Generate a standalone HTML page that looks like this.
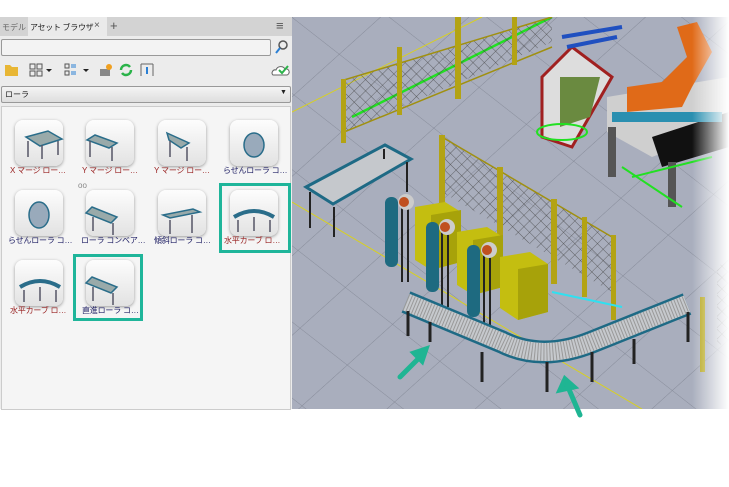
<!DOCTYPE html>
<html><head><meta charset="utf-8"><style>
body{margin:0;width:729px;height:487px;background:#fff;position:relative;overflow:hidden;font-family:"Liberation Sans","Noto Sans CJK JP",sans-serif;}
.abs{position:absolute}
#panel{left:0;top:17px;width:292px;height:392px;background:#ececec;}
.tile{position:absolute;width:48px;height:46px;border-radius:8px;background:linear-gradient(#fdfdfd,#e2e2e2);box-shadow:0 1px 3px #999;}
.lbl{position:absolute;font-size:8px;color:#222;white-space:nowrap;letter-spacing:-0.2px}
.hl{position:absolute;border:3px solid #1fb59a;}
</style></head><body>
<div id="panel" class="abs">
 <div class="abs" style="left:0;top:0;width:292px;height:19px;background:#d3d3d3"></div>
 <div class="abs" style="left:2px;top:5px;font-size:8px;color:#666">モデル</div>
 <div class="abs" style="left:28px;top:0;width:79px;height:19px;background:#eaeaea"></div>
 <div class="abs" style="left:30px;top:5px;font-size:8px;color:#222;letter-spacing:-0.3px">アセット ブラウザ</div>
 <div class="abs" style="left:94px;top:3px;font-size:10px;color:#555">×</div>
 <div class="abs" style="left:110px;top:1px;font-size:13px;color:#555">+</div>
 <div class="abs" style="left:276px;top:1px;font-size:13px;color:#555">≡</div>
 <div class="abs" style="left:1px;top:22px;width:268px;height:15px;background:#f3f3f3;border:1px solid #999;border-radius:2px"></div>
 <svg class="abs" style="left:274px;top:22px" width="16" height="16"><circle cx="9" cy="6" r="4" fill="none" stroke="#555" stroke-width="1.5"/><path d="M6 9 L2 14" stroke="#2a7fd4" stroke-width="2"/></svg>
 <svg class="abs" style="left:3px;top:44px" width="160" height="18">
  <path d="M2 4h5l2 2h6v9H2z" fill="#e8b634"/>
  <g fill="none" stroke="#555"><rect x="27" y="3" width="5" height="5"/><rect x="34" y="3" width="5" height="5"/><rect x="27" y="10" width="5" height="5"/><rect x="34" y="10" width="5" height="5"/></g>
  <path d="M43 8h6l-3 3z" fill="#222"/>
  <g fill="none" stroke="#555"><rect x="62" y="3" width="4" height="4"/><rect x="62" y="10" width="4" height="4"/></g><path d="M68 4h5M68 6h5M68 11h5M68 13h5" stroke="#2a7fd4"/>
  <path d="M80 8h6l-3 3z" fill="#222"/>
  <rect x="97" y="8" width="10" height="7" fill="#888"/><circle cx="106" cy="6" r="3" fill="#f0a020"/>
  <path d="M118 9a5 5 0 0 1 9-3M128 9a5 5 0 0 1-9 3" stroke="#2bb34a" stroke-width="2.5" fill="none"/>
  <path d="M138 3v12M150 3v12M138 3h12" stroke="#666" fill="none"/><path d="M144 6v7" stroke="#2a7fd4" stroke-width="2"/>
 </svg>
 <svg class="abs" style="left:270px;top:46px" width="20" height="14"><path d="M3 12h14a3 3 0 0 0-2-6a5 5 0 0 0-9 1a3 3 0 0 0-3 5z" fill="#fff" stroke="#666"/><path d="M9 7l3 3l6-7" stroke="#2bb34a" stroke-width="2" fill="none"/></svg>
 <div class="abs" style="left:1px;top:69px;width:288px;height:15px;background:linear-gradient(#f4f4f4,#dedede);border:1px solid #999;border-radius:2px"></div>
 <div class="abs" style="left:5px;top:72px;font-size:8px;color:#222">ローラ</div>
 <div class="abs" style="left:280px;top:72px;font-size:7px;color:#222">▼</div>
 <div class="abs" style="left:1px;top:89px;width:288px;height:302px;background:#f5f5f5;border:1px solid #ccc"></div>

 <div class="tile" style="left:15px;top:103px"></div><div class="lbl" style="left:10px;top:148px;color:#922">X マージ ロー…</div>
 <div class="tile" style="left:86px;top:103px"></div><div class="lbl" style="left:82px;top:148px;color:#922">Y マージ ロー…</div>
 <div class="tile" style="left:158px;top:103px"></div><div class="lbl" style="left:154px;top:148px;color:#922">Y マージ ロー…</div>
 <div class="tile" style="left:230px;top:103px"></div><div class="lbl" style="left:223px;top:148px;color:#226">らせんローラ コ…</div>
 <div class="abs" style="left:78px;top:164px;font-size:8px;color:#888">oo</div>
 <div class="tile" style="left:15px;top:173px"></div><div class="lbl" style="left:8px;top:218px;color:#226">らせんローラ コ…</div>
 <div class="tile" style="left:86px;top:173px"></div><div class="lbl" style="left:81px;top:218px;color:#226">ローラ コンベア…</div>
 <div class="tile" style="left:158px;top:173px"></div><div class="lbl" style="left:154px;top:218px;color:#226">傾斜ローラ コ…</div>
 <div class="tile" style="left:230px;top:173px"></div><div class="lbl" style="left:224px;top:218px;color:#922">水平カーブ ロ…</div>
 <div class="hl" style="left:219px;top:166px;width:66px;height:64px"></div>
 <div class="tile" style="left:15px;top:243px"></div><div class="lbl" style="left:10px;top:288px;color:#922">水平カーブ ロ…</div>
 <div class="tile" style="left:86px;top:243px"></div><div class="lbl" style="left:82px;top:288px;color:#226">直進ローラ コ…</div>
 <div class="hl" style="left:73px;top:237px;width:64px;height:61px"></div>
 <svg class="abs" style="left:0;top:100px" width="292" height="200" fill="none" stroke="#556" stroke-width="1.5">
  <path d="M26 20l22-6l14 8l-22 7z" fill="#9aa" stroke="#2a6d8a"/><path d="M28 24v16M58 24v14M42 28v14"/>
  <path d="M95 18l22 8l-8 5l-22-8z" fill="#9aa" stroke="#2a6d8a"/><path d="M90 24v16M112 30v14"/>
  <path d="M167 16l22 10l-8 5l-12-8z" fill="#9aa" stroke="#2a6d8a"/><path d="M170 24v16M187 30v14"/>
  <ellipse cx="254" cy="28" rx="10" ry="12" fill="#9ab" stroke="#2a6d8a"/>
  <ellipse cx="39" cy="98" rx="10" ry="13" fill="#9ab" stroke="#2a6d8a"/>
  <path d="M92 90l25 10l-6 6l-25-10z" fill="#9aa" stroke="#2a6d8a"/><path d="M93 100v14M113 106v12"/>
  <path d="M163 98l30-6l7 3l-30 6z" fill="#9aa" stroke="#2a6d8a"/><path d="M170 103v14M192 98v18"/>
  <path d="M234 100q20-12 40 0" stroke="#2a6d8a" stroke-width="4"/><path d="M238 103v12M270 103v12M254 100v14"/>
  <path d="M20 170q20-12 40 0" stroke="#2a6d8a" stroke-width="4"/><path d="M24 173v12M56 173v12M40 170v14"/>
  <path d="M92 160l25 10l-6 6l-25-10z" fill="#9aa" stroke="#2a6d8a"/><path d="M93 170v14M113 176v12"/>
 </svg>
</div>

<svg class="abs" style="left:292px;top:17px" width="437" height="392">
 <defs>
  <pattern id="g" width="60" height="60" patternUnits="userSpaceOnUse" patternTransform="rotate(38) skewX(-10)"><rect width="60" height="60" fill="#a9aebd"/><path d="M0 0H60M0 0V60" stroke="#7d8290" stroke-width="0.8"/></pattern>
  <pattern id="m" width="8" height="8" patternUnits="userSpaceOnUse" patternTransform="rotate(45)"><path d="M0 0H8M0 0V8" stroke="#444" stroke-width="0.7"/></pattern>
  <linearGradient id="f" x1="0" x2="1"><stop offset="0" stop-color="#fff" stop-opacity="0"/><stop offset="1" stop-color="#fff"/></linearGradient>
 </defs>
 <rect width="437" height="392" fill="url(#g)"/>
 <path d="M0 95L190 0" stroke="#d8d020"/><path d="M0 185L350 392" stroke="#d8d020"/>
 <path d="M60 100L260 0" stroke="#22e022" stroke-width="2.5"/>
 <path d="M52 63L260 0V25L52 115z" fill="url(#m)"/>
 <path d="M52 63L260 0M52 115L260 30" stroke="#a09010" stroke-width="1.5"/>
 <g fill="#b3a314"><rect x="49" y="62" width="5" height="64"/><rect x="105" y="30" width="5" height="68"/><rect x="163" y="0" width="6" height="82"/><rect x="220" y="0" width="5" height="48"/></g>
 <path d="M14 170L93 128L119 142L41 187z" fill="#c5c8cc" stroke="#1e6a85" stroke-width="3"/>
 <path d="M18 175v36M42 190v30M115 145v30M92 132v10" stroke="#222" stroke-width="2"/>
 <path d="M150 120L320 220V275L150 175z" fill="url(#m)"/>
 <path d="M150 120L320 220" stroke="#a09010" stroke-width="1.5"/>
 <g fill="#b3a314"><rect x="147" y="118" width="6" height="90"/><rect x="205" y="150" width="6" height="85"/><rect x="259" y="182" width="6" height="85"/><rect x="290" y="200" width="5" height="80"/><rect x="319" y="218" width="5" height="85"/></g>
 <path d="M260 275L330 290" stroke="#30e0f0" stroke-width="2"/>
 <path d="M123 190l30-5l16 10v50l-30 8l-16-10z" fill="#c4be10"/><path d="M139 198l30-5v52l-30 8z" fill="#a7a20a"/>
 <path d="M165 215l30-5l16 10v50l-30 8l-16-10z" fill="#c4be10"/><path d="M181 223l30-5v52l-30 8z" fill="#a7a20a"/>
 <path d="M208 240l30-5l18 12v48l-30 8l-18-12z" fill="#c4be10"/><path d="M226 252l30-5v48l-30 8z" fill="#a7a20a"/>
 <g fill="#1e6a80"><rect x="93" y="180" width="13" height="70" rx="6"/><rect x="134" y="205" width="13" height="70" rx="6"/><rect x="175" y="228" width="13" height="72" rx="6"/></g>
 <g stroke="#222" stroke-width="2"><path d="M110 190v75M116 190v75M150 215v75M156 215v75M192 238v75M198 238v75"/></g>
 <g><circle cx="114" cy="185" r="8" fill="#ccc"/><circle cx="112" cy="185" r="5" fill="#c05020"/><circle cx="155" cy="210" r="8" fill="#ccc"/><circle cx="153" cy="210" r="5" fill="#c05020"/><circle cx="197" cy="233" r="8" fill="#ccc"/><circle cx="195" cy="233" r="5" fill="#c05020"/></g>
 <path d="M114 285L210 325Q250 345 300 325L395 287" fill="none" stroke="#1e6a85" stroke-width="23"/>
 <path d="M114 285L210 325Q250 345 300 325L395 287" fill="none" stroke="#c6c9cd" stroke-width="18"/>
 <path d="M114 285L210 325Q250 345 300 325L395 287" fill="none" stroke="#999" stroke-width="18" stroke-dasharray="1 2"/>
 <g stroke="#222" stroke-width="3"><path d="M116 294v25M138 305v20M190 335v30M255 345v30M300 335v30M342 322v25M396 295v30"/></g>
 <path d="M250 60l30-30l40 30l-40 70l-30-10z" fill="#ddd" stroke="#a02020" stroke-width="3"/>
 <path d="M268 60l40 0l-10 40l-30 10z" fill="#6a8a40"/>
 <path d="M270 20l60-10M275 30l50-10" stroke="#2050c0" stroke-width="4"/>
 <ellipse cx="270" cy="115" rx="25" ry="8" fill="none" stroke="#22e022" stroke-width="2"/>
 <path d="M315 80L437 60V110L360 140L315 115z" fill="#cfcfcf"/>
 <path d="M360 120L437 95V130L370 150z" fill="#111"/>
 <path d="M320 95h110v10H320z" fill="#2a8fb0"/>
 <path d="M320 110v50M380 145v45" stroke="#555" stroke-width="8"/>
 <path d="M335 95l0-25l35-5l25-25l-10-30l20-5l15 30l-20 35l-10 20z" fill="#e06a18"/>
 <path d="M340 160l80-20M330 150l60 40" stroke="#22e022" stroke-width="2"/>
 <path d="M425 250l12-8v80l-12 8z" fill="url(#m)"/><rect x="408" y="280" width="5" height="75" fill="#b3a314"/>
 <rect x="400" y="0" width="37" height="392" fill="url(#f)"/>
</svg>
<svg class="abs" style="left:390px;top:335px" width="220" height="95">
 <path d="M10 42L32 20M24 18l12-4l-4 12z" stroke="#1fb593" stroke-width="5" fill="#1fb593" stroke-linecap="round"/>
 <path d="M190 80L178 52M170 55l5-11l9 8z" stroke="#1fb593" stroke-width="5" fill="#1fb593" stroke-linecap="round"/>
</svg>
</body></html>
